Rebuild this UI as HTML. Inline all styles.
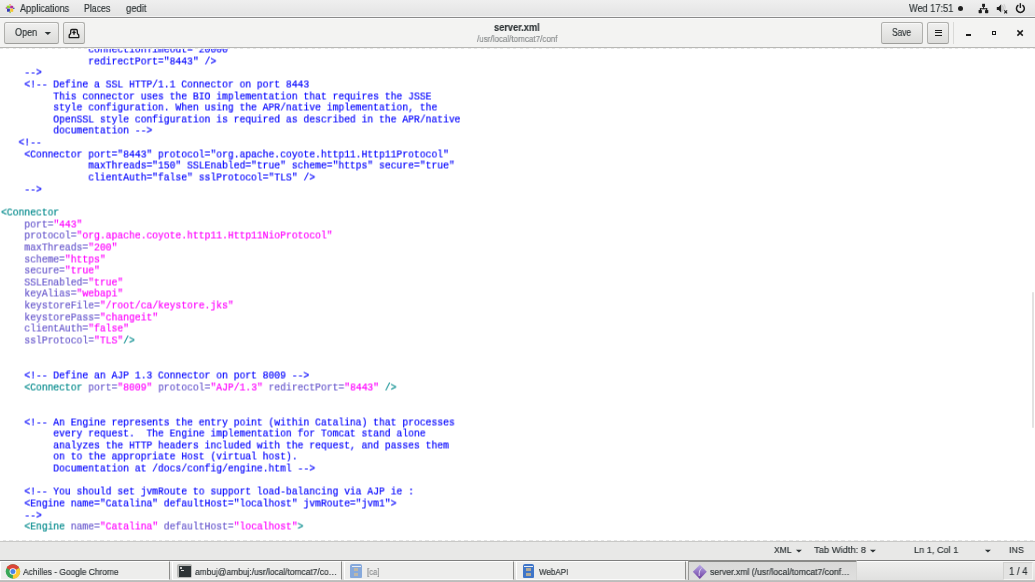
<!DOCTYPE html>
<html><head><meta charset="utf-8">
<style>
*{margin:0;padding:0;box-sizing:border-box}
html,body{width:1035px;height:582px;overflow:hidden;background:#fff;font-family:"Liberation Sans",sans-serif;position:relative}
div,svg{position:absolute}
.lbl{white-space:nowrap;transform-origin:0 0;will-change:transform;-webkit-text-stroke:0.18px}
#code{left:1.45px;top:-4.0px;font-family:"Liberation Mono",monospace;font-size:10.4px;line-height:11.64px;white-space:pre;color:#000;transform:translateY(0.45px) scaleX(0.9327);transform-origin:0 0;-webkit-text-stroke:0.2px;margin:0;will-change:transform}
.c{color:#0000ff}.e{color:#008a8c}.n{color:#6a5acd}.v{color:#ff00ff}
.btn{border:1px solid #b0b0ad;border-bottom-color:#9e9e9b;border-radius:2.5px;background:linear-gradient(#f0f0ef,#dcdcda);box-shadow:inset 0 1px 0 #f8f8f8}
.tb{top:1px;height:20px;width:170px;background:#ededec;border-top:1px solid #fff;border-left:1px solid #fff;border-right:1px solid #8c8c8a;border-bottom:1px solid #b0b0ae}
</style></head><body>

<div style="left:0;top:0;width:1035px;height:17px;background:linear-gradient(#efefef,#e3e3e3)"></div>
<div style="left:0;top:16px;width:1035px;height:1px;background:#f4f4f4"></div>
<div style="left:0;top:17px;width:1035px;height:1px;background:#8a8a8a"></div>
<svg style="left:5px;top:3px" width="11" height="11" viewBox="0 0 11 11">
<rect x="1.8" y="2.6" width="3.1" height="2.6" fill="#8ed42f" transform="rotate(-8 3.3 3.9)"/>
<rect x="5.2" y="2.8" width="2.9" height="2.6" fill="#b42e98" transform="rotate(8 6.6 4.1)"/>
<rect x="2" y="5.6" width="2.9" height="3.1" fill="#3138b4"/>
<rect x="5.2" y="5.7" width="3.0" height="3.1" fill="#f7c52c"/>
<circle cx="5" cy="1.8" r="0.8" fill="#f6a53a"/>
<circle cx="1.4" cy="5.0" r="0.8" fill="#b72d8e"/>
<circle cx="8.8" cy="5.2" r="0.8" fill="#2f3fa6"/>
<circle cx="5.1" cy="9.4" r="0.8" fill="#8ccf3c"/>
</svg>
<div class="lbl" style="left:20.00px;top:2.55px;font-size:10.2px;line-height:12.24px;color:#2e3436;transform:scaleX(0.8946);">Applications</div>
<div class="lbl" style="left:83.70px;top:2.55px;font-size:10.2px;line-height:12.24px;color:#2e3436;transform:scaleX(0.8591);">Places</div>
<div class="lbl" style="left:126.00px;top:2.55px;font-size:10.2px;line-height:12.24px;color:#2e3436;transform:scaleX(0.9269);">gedit</div>
<div class="lbl" style="left:909.40px;top:2.55px;font-size:10.2px;line-height:12.24px;color:#2e3436;transform:scaleX(0.9014);">Wed 17:51</div>
<div style="left:957.5px;top:5.5px;width:5px;height:5px;border-radius:50%;background:#202020"></div>
<svg style="left:975px;top:0px" width="60" height="17" viewBox="975 0 60 17">
<rect x="982.1" y="3.8" width="2.9" height="3.1" fill="#1e1e1e"/>
<rect x="983.05" y="6.6" width="1" height="2.3" fill="#1e1e1e"/>
<rect x="979.9" y="8.2" width="7.3" height="1.1" fill="#1e1e1e"/>
<rect x="979.9" y="8.2" width="1.1" height="2" fill="#1e1e1e"/>
<rect x="986.1" y="8.2" width="1.1" height="2" fill="#1e1e1e"/>
<rect x="978.6" y="9.9" width="3.3" height="3.3" rx="0.6" fill="#1e1e1e"/>
<rect x="985.0" y="9.9" width="3.3" height="3.3" rx="0.6" fill="#1e1e1e"/>
<path d="M996.8,7 H998.6 L1001.2,4.3 V12.6 L998.6,10 H996.8 Z" fill="#1e1e1e"/>
<path d="M1002.4,5.4 Q1004.2,8.4 1002.4,11.4" stroke="#c4c4c4" stroke-width="1.1" fill="none"/>
<path d="M1003.8,4 Q1006.6,8.4 1003.8,10" stroke="#cfcfcf" stroke-width="1.1" fill="none"/>
<path d="M1004.3,10.3 L1007.1,13.3 M1007.1,10.3 L1004.3,13.3" stroke="#1e1e1e" stroke-width="1.1"/>
<path d="M1018.4,5.2 A3.9,3.9 0 1 0 1022.4,5.2" stroke="#1e1e1e" stroke-width="1.5" fill="none"/>
<rect x="1019.65" y="3.2" width="1.4" height="4.8" fill="#1e1e1e"/>
</svg>
<div style="left:0;top:18px;width:1035px;height:29px;background:#f3f3f2"></div>
<div style="left:0;top:18px;width:1035px;height:1px;background:#fbfbfb"></div>
<div style="left:0;top:47px;width:1035px;height:1px;background:#b8b8b5"></div>
<div class="btn" style="left:4px;top:22px;width:55px;height:22px"></div>
<div class="lbl" style="left:15.00px;top:26.26px;font-size:10.5px;line-height:12.6px;color:#2e3436;transform:scaleX(0.8644);">Open</div>
<svg style="left:44px;top:31px" width="8" height="5" viewBox="0 0 8 5"><path d="M0.6,1 H7.1 L3.85,4.1 Z" fill="#2e3436"/></svg>
<div class="btn" style="left:63px;top:22px;width:22px;height:22px"></div>
<svg style="left:66px;top:26px" width="16" height="15" viewBox="66 26 16 15">
<path d="M69.2,37.6 V35.6 Q69.2,34.6 70.1,34.1 Q70.7,33.7 70.7,33 V30.8 Q70.7,29.5 71.9,29.5 H76.1 Q77.3,29.5 77.3,30.8 V33 Q77.3,33.7 77.9,34.1 Q78.8,34.6 78.8,35.6 V37.6 Z" stroke="#1a1a1a" stroke-width="1.3" fill="none" stroke-linejoin="round"/>
<rect x="73.3" y="30.5" width="1.4" height="4.2" fill="#1a1a1a"/><rect x="72.3" y="31.8" width="3.4" height="1.3" fill="#1a1a1a"/>
</svg>
<div class="lbl" style="left:494.20px;top:21.85px;font-size:10.2px;line-height:12.24px;color:#2e3436;font-weight:bold;transform:scaleX(0.9074);">server.xml</div>
<div class="lbl" style="left:476.80px;top:33.79px;font-size:9.2px;line-height:11.04px;color:#8b8e8f;transform:scaleX(0.8758);">/usr/local/tomcat7/conf</div>
<div class="btn" style="left:881px;top:22px;width:42px;height:22px"></div>
<div class="lbl" style="left:892.20px;top:26.06px;font-size:10.5px;line-height:12.6px;color:#2e3436;transform:scaleX(0.7981);">Save</div>
<div class="btn" style="left:927px;top:22px;width:22px;height:22px"></div>
<div style="left:934.5px;top:29.7px;width:7px;height:1.1px;background:#1c1c1c"></div>
<div style="left:934.5px;top:32.3px;width:7px;height:1.1px;background:#1c1c1c"></div>
<div style="left:934.5px;top:35.1px;width:7px;height:1.1px;background:#1c1c1c"></div>
<div style="left:953px;top:22px;width:1px;height:22px;background:#d9d9d7"></div>
<div style="left:966px;top:34px;width:5.2px;height:2px;background:#1c1c1c"></div>
<div style="left:991.9px;top:30.9px;width:4.4px;height:4.2px;border:1.5px solid #1c1c1c"></div>
<svg style="left:1016px;top:29px" width="8" height="8" viewBox="0 0 8 8"><path d="M1.4,1.4 L6.8,6.6 M6.8,1.4 L1.4,6.6" stroke="#1c1c1c" stroke-width="1.5"/></svg>
<div style="left:0;top:48px;width:1035px;height:493px;background:#fff;overflow:hidden">
<pre id="code" style="position:absolute"><span class="c">               connectionTimeout=&quot;20000&quot;</span>
<span class="c">               redirectPort=&quot;8443&quot; /&gt;</span>
<span class="c">    --&gt;</span>
<span class="c">    &lt;!-- Define a SSL HTTP/1.1 Connector on port 8443</span>
<span class="c">         This connector uses the BIO implementation that requires the JSSE</span>
<span class="c">         style configuration. When using the APR/native implementation, the</span>
<span class="c">         OpenSSL style configuration is required as described in the APR/native</span>
<span class="c">         documentation --&gt;</span>
<span class="c">   &lt;!--</span>
<span class="c">    &lt;Connector port=&quot;8443&quot; protocol=&quot;org.apache.coyote.http11.Http11Protocol&quot;</span>
<span class="c">               maxThreads=&quot;150&quot; SSLEnabled=&quot;true&quot; scheme=&quot;https&quot; secure=&quot;true&quot;</span>
<span class="c">               clientAuth=&quot;false&quot; sslProtocol=&quot;TLS&quot; /&gt;</span>
<span class="c">    --&gt;</span>

<span class="e">&lt;Connector</span>
<span class="n">    port=</span><span class="v">&quot;443&quot;</span>
<span class="n">    protocol=</span><span class="v">&quot;org.apache.coyote.http11.Http11NioProtocol&quot;</span>
<span class="n">    maxThreads=</span><span class="v">&quot;200&quot;</span>
<span class="n">    scheme=</span><span class="v">&quot;https&quot;</span>
<span class="n">    secure=</span><span class="v">&quot;true&quot;</span>
<span class="n">    SSLEnabled=</span><span class="v">&quot;true&quot;</span>
<span class="n">    keyAlias=</span><span class="v">&quot;webapi&quot;</span>
<span class="n">    keystoreFile=</span><span class="v">&quot;/root/ca/keystore.jks&quot;</span>
<span class="n">    keystorePass=</span><span class="v">&quot;changeit&quot;</span>
<span class="n">    clientAuth=</span><span class="v">&quot;false&quot;</span>
<span class="n">    sslProtocol=</span><span class="v">&quot;TLS&quot;</span><span class="e">/&gt;</span>


<span class="c">    &lt;!-- Define an AJP 1.3 Connector on port 8009 --&gt;</span>
<span class="e">    &lt;Connector</span><span class="n"> port=</span><span class="v">&quot;8009&quot;</span><span class="n"> protocol=</span><span class="v">&quot;AJP/1.3&quot;</span><span class="n"> redirectPort=</span><span class="v">&quot;8443&quot;</span><span class="e"> /&gt;</span>


<span class="c">    &lt;!-- An Engine represents the entry point (within Catalina) that processes</span>
<span class="c">         every request.  The Engine implementation for Tomcat stand alone</span>
<span class="c">         analyzes the HTTP headers included with the request, and passes them</span>
<span class="c">         on to the appropriate Host (virtual host).</span>
<span class="c">         Documentation at /docs/config/engine.html --&gt;</span>

<span class="c">    &lt;!-- You should set jvmRoute to support load-balancing via AJP ie :</span>
<span class="c">    &lt;Engine name=&quot;Catalina&quot; defaultHost=&quot;localhost&quot; jvmRoute=&quot;jvm1&quot;&gt;</span>
<span class="c">    --&gt;</span>
<span class="e">    &lt;Engine</span><span class="n"> name=</span><span class="v">&quot;Catalina&quot;</span><span class="n"> defaultHost=</span><span class="v">&quot;localhost&quot;</span><span class="e">&gt;</span>
</pre>
</div>
<div style="left:1032.3px;top:292px;width:2px;height:136px;background:#e2e2e2;border-radius:1px"></div>
<div style="left:0;top:48px;width:1035px;height:1px;background:repeating-linear-gradient(90deg,#e6e6e6 0 3px,#fafafa 3px 6.5px)"></div>
<div style="left:0;top:540px;width:1035px;height:1px;background:repeating-linear-gradient(90deg,#fbfbfb 0 3px,#e3e3e3 3px 6.5px)"></div>
<div style="left:0;top:541px;width:1035px;height:1px;background:#c9c9c7"></div>
<div style="left:0;top:542px;width:1035px;height:18px;background:#e8e8e7"></div>
<div class="lbl" style="left:773.70px;top:544.43px;font-size:9.9px;line-height:11.88px;color:#2e3436;transform:scaleX(0.8696);">XML</div>
<svg style="left:795px;top:549px" width="8" height="5" viewBox="0 0 8 5"><path d="M0.9,0.8 H6.9 L3.9,3.4 Z" fill="#2e3436"/></svg>
<div class="lbl" style="left:813.50px;top:544.43px;font-size:9.9px;line-height:11.88px;color:#2e3436;transform:scaleX(0.9469);">Tab Width: 8</div>
<svg style="left:869px;top:549px" width="8" height="5" viewBox="0 0 8 5"><path d="M0.9,0.8 H6.9 L3.9,3.4 Z" fill="#2e3436"/></svg>
<div class="lbl" style="left:914.00px;top:544.43px;font-size:9.9px;line-height:11.88px;color:#2e3436;transform:scaleX(0.9274);">Ln 1, Col 1</div>
<svg style="left:983.5px;top:549px" width="8" height="5" viewBox="0 0 8 5"><path d="M0.9,0.8 H6.9 L3.9,3.4 Z" fill="#2e3436"/></svg>
<div class="lbl" style="left:1009.30px;top:544.43px;font-size:9.9px;line-height:11.88px;color:#2e3436;transform:scaleX(0.8968);">INS</div>
<div style="left:0;top:560px;width:1035px;height:22px;background:linear-gradient(#efefee,#dfdfde)">
<div style="left:0;top:20px;width:1035px;height:2px;background:linear-gradient(#c4c4c3,#b9b9b8)"></div>
<div style="left:0;top:0;width:1035px;height:1px;background:#7f7f7f"></div>
<div style="left:0;top:1px;width:1035px;height:1px;background:#fdfdfd"></div>
</div>
<div style="left:0px;top:561px;width:170px;height:19px;background:#ededec;border-top:1px solid #fff;border-left:1px solid #fff;border-right:1px solid #8c8c8a;border-bottom:1px solid #fbfbfb"></div>
<div class="lbl" style="left:23.20px;top:566.88px;font-size:9.0px;line-height:10.8px;color:#2e3436;transform:scaleX(0.9323);">Achilles - Google Chrome</div>
<div style="left:172px;top:561px;width:170px;height:19px;background:#ededec;border-top:1px solid #fff;border-left:1px solid #fff;border-right:1px solid #8c8c8a;border-bottom:1px solid #fbfbfb"></div>
<div class="lbl" style="left:194.90px;top:566.88px;font-size:9.0px;line-height:10.8px;color:#2e3436;transform:scaleX(0.9324);">ambuj@ambuj:/usr/local/tomcat7/co…</div>
<div style="left:344px;top:561px;width:170px;height:19px;background:#ededec;border-top:1px solid #fff;border-left:1px solid #fff;border-right:1px solid #8c8c8a;border-bottom:1px solid #fbfbfb"></div>
<div class="lbl" style="left:367.00px;top:566.88px;font-size:9.0px;line-height:10.8px;color:#8b8e8f;transform:scaleX(0.8617);">[ca]</div>
<div style="left:516px;top:561px;width:170px;height:19px;background:#ededec;border-top:1px solid #fff;border-left:1px solid #fff;border-right:1px solid #8c8c8a;border-bottom:1px solid #fbfbfb"></div>
<div class="lbl" style="left:538.80px;top:566.88px;font-size:9.0px;line-height:10.8px;color:#2e3436;transform:scaleX(0.8950);">WebAPI</div>
<div style="left:688px;top:560px;width:169px;height:20px;background:linear-gradient(#d9d9d8,#dfdfde);border-top:2px solid #8a8a88;border-left:1px solid #9a9a98;border-right:1px solid #d6d6d4"></div>
<div class="lbl" style="left:710.40px;top:566.88px;font-size:9.0px;line-height:10.8px;color:#2e3436;transform:scaleX(0.9599);">server.xml (/usr/local/tomcat7/conf…</div>
<svg style="left:5px;top:564px" width="16" height="16" viewBox="0 0 16 16">
<circle cx="7.9" cy="7.5" r="7.2" fill="#3aa757"/>
<path d="M7.9,7.5 L1.6,3.9 A7.2,7.2 0 0 1 14.2,3.9 Z" fill="#db4437"/>
<path d="M7.9,7.5 L14.2,3.9 A7.2,7.2 0 0 1 7.9,14.7 Z" fill="#fcc934"/>
<circle cx="7.9" cy="7.5" r="3.3" fill="#fff"/>
<circle cx="7.9" cy="7.5" r="2.5" fill="#4a84e8"/>
</svg>
<div style="left:177px;top:564px;width:15px;height:14px;background:#b9bab8;border-radius:2px"></div>
<div style="left:178.5px;top:565.5px;width:12px;height:11px;background:#2e3436"></div>
<div style="left:180px;top:567px;width:1.5px;height:1.5px;background:#ccc"></div>
<div style="left:181px;top:570px;width:3px;height:1px;background:#ddd"></div>
<div style="left:350.3px;top:564px;width:11.8px;height:13.8px;background:#86a9dc;border-radius:2px 2px 1px 1px"></div>
<div style="left:351.8px;top:565.8px;width:8.8px;height:1px;background:#e8eef8"></div>
<div style="left:354.0px;top:568.4px;width:4.4px;height:2.6px;background:#bdb7a8"></div>
<div style="left:354.0px;top:573.2px;width:4.4px;height:2.6px;background:#bdb7a8"></div>
<div style="left:522.6px;top:564px;width:11.8px;height:13.8px;background:#3f75c8;border-radius:2px 2px 1px 1px"></div>
<div style="left:524.1px;top:565.8px;width:8.8px;height:1px;background:#e8eef8"></div>
<div style="left:526.3000000000001px;top:568.4px;width:4.4px;height:2.6px;background:#b2ab98"></div>
<div style="left:526.3000000000001px;top:573.2px;width:4.4px;height:2.6px;background:#b2ab98"></div>
<svg style="left:692px;top:564px" width="16" height="16" viewBox="0 0 16 16">
<defs><linearGradient id="dg" x1="0" y1="0" x2="0" y2="1"><stop offset="0" stop-color="#b8a8e8"/><stop offset="1" stop-color="#6e3fa0"/></linearGradient></defs>
<path d="M7.8,0.8 L14.8,7.8 L7.8,14.9 L0.8,7.8 Z" fill="url(#dg)"/>
<path d="M9.6,4.2 Q6.8,6 7.2,12" stroke="#e6e0f4" stroke-width="0.9" fill="none"/>
</svg>
<div style="left:1003px;top:562px;width:30px;height:18px;background:#e3e3e2;border:1px solid #d2d2d0;border-right-color:#f4f4f3;border-bottom-color:#f4f4f3"></div>
<div class="lbl" style="left:1009.20px;top:565.76px;font-size:10.4px;line-height:12.48px;color:#2e3436;transform:scaleX(0.9143);">1 / 4</div>
</body></html>
